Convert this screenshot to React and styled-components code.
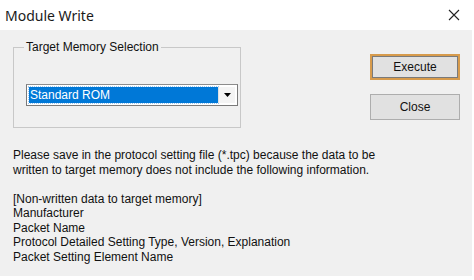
import React from 'react';
import styled, { createGlobalStyle } from 'styled-components';

const Global = createGlobalStyle`
  html, body { margin: 0; padding: 0; background: #ffffff; }
  body { width: 474px; height: 280px; overflow: hidden; }
`;

const Window = styled.div`
  width: 474px;
  height: 280px;
  display: flex;
  flex-direction: column;
  background: #ffffff;
`;

const TitleBar = styled.div`
  height: 30px;
  display: flex;
  align-items: center;
  justify-content: space-between;
  padding: 0 14px 0 5px;
  font-family: "Noto Sans", "Open Sans", sans-serif;
  font-size: 14px;
  color: #1a1a1a;
`;

const Body = styled.div`
  flex: 1;
  background: #f0f0f0;
  margin: 0 2px 4px 0;
  padding: 10px 0 0 13px;
  font-family: "Liberation Sans", Arial, sans-serif;
  font-size: 12px;
  color: #111;
`;

const TopRow = styled.div`
  display: flex;
  align-items: flex-start;
`;

const Group = styled.fieldset`
  width: 228px;
  height: 88px;
  box-sizing: border-box;
  margin: 0;
  padding: 0 0 0 12px;
  border: 1px solid #c8c8c8;
  border-radius: 0;
`;

const Legend = styled.legend`
  padding: 0 2px;
  margin-left: -2px;
  font-size: 12px;
  color: #111;
`;

const Combo = styled.div`
  margin-top: 30px;
  width: 212px;
  height: 22px;
  box-sizing: border-box;
  border: 1px solid #7a7a7a;
  border-top-color: #8c8c8c;
  background: #fff;
  display: flex;
  align-items: stretch;
  padding: 2px;
`;

const Selected = styled.div`
  flex: 1;
  background: #0078d7;
  color: #fff;
  display: flex;
  align-items: center;
  padding-left: 1px;
  outline: 1px dotted #9cc7ef;
`;

const ArrowBtn = styled.div`
  width: 16px;
  display: flex;
  align-items: center;
  justify-content: center;
  border-left: 1px solid #e0e0e0;
  background: #f4f4f4;
`;

const Buttons = styled.div`
  margin-left: auto;
  margin-right: 12px;
  margin-top: 14px;
  display: flex;
  flex-direction: column;
  gap: 14px;
`;

const Button = styled.div`
  width: 90px;
  height: 26px;
  box-sizing: border-box;
  display: flex;
  align-items: center;
  justify-content: center;
  background: #e1e1e1;
  border: ${p => (p.$default ? '2px solid #d79b4c' : '1px solid #adadad')};
  box-shadow: ${p => (p.$default ? 'inset 0 0 0 1px #7a7a7a' : 'none')};
  color: #111;
`;

const Message = styled.div`
  margin-top: 20px;
  line-height: 14.5px;
`;

const Line = styled.div`
  min-height: 14.5px;
`;

const lines = [
  'Please save in the protocol setting file (*.tpc) because the data to be',
  'written to target memory does not include the following information.',
  '',
  '[Non-written data to target memory]',
  'Manufacturer',
  'Packet Name',
  'Protocol Detailed Setting Type, Version, Explanation',
  'Packet Setting Element Name',
];

export default function App() {
  return (
    <>
      <Global />
      <Window>
        <TitleBar>
          <span>Module Write</span>
          <svg width="12" height="12" viewBox="0 0 12 12">
            <path d="M1 1 L11 11 M11 1 L1 11" stroke="#222" strokeWidth="1.1" />
          </svg>
        </TitleBar>
        <Body>
          <TopRow>
            <Group>
              <Legend>Target Memory Selection</Legend>
              <Combo>
                <Selected>Standard ROM</Selected>
                <ArrowBtn>
                  <svg width="7" height="4" viewBox="0 0 7 4">
                    <path d="M0 0 H7 L3.5 4 Z" fill="#000" />
                  </svg>
                </ArrowBtn>
              </Combo>
            </Group>
            <Buttons>
              <Button $default>Execute</Button>
              <Button>Close</Button>
            </Buttons>
          </TopRow>
          <Message>
            {lines.map((l, i) => (
              <Line key={i}>{l}</Line>
            ))}
          </Message>
        </Body>
      </Window>
    </>
  );
}
